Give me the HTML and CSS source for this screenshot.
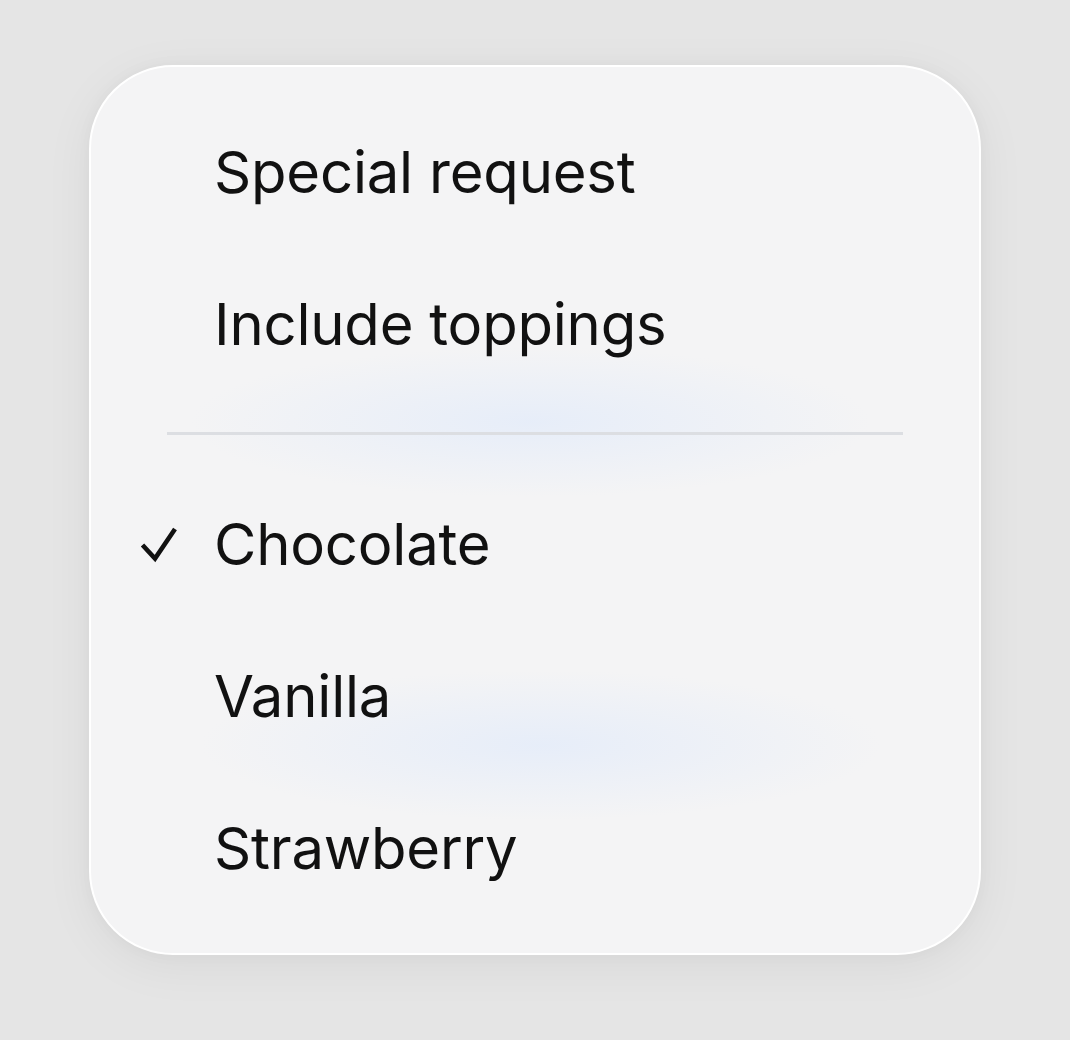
FILE: index.html
```html
<!DOCTYPE html>
<html>
<head>
    <title>Flavor menu</title>
    <link rel="stylesheet" href="styles.css">
</head>
<body>
    <div class="menu">
        <div class="item"><span class="check"></span><span class="label">Special request</span></div>
        <div class="item"><span class="check"></span><span class="label">Include toppings</span></div>

        <div class="divider"></div>

        <div class="item selected">
            <span class="check">
                <svg width="38" height="38" viewBox="0 0 38 38">
                    <path d="M3.5 20 L16 33.5 L36 4" fill="none" stroke="#111" stroke-width="4.6" stroke-linejoin="miter"/>
                </svg>
            </span>
            <span class="label">Chocolate</span>
        </div>
        <div class="item"><span class="check"></span><span class="label">Vanilla</span></div>
        <div class="item"><span class="check"></span><span class="label">Strawberry</span></div>
    </div>
</body>
</html>
```

FILE: styles.css
```css
html {
    background: #e5e5e5;
}
body {
    margin: 0;
    padding: 65px 0 0;
    min-height: 100vh;
    box-sizing: border-box;
    font-family: Inter, "Noto Sans", sans-serif;
    display: flex;
    justify-content: center;
    align-items: flex-start;
}
.menu {
    box-sizing: border-box;
    width: 892px;
    padding: 29px 0;
    border: 2px solid #fff;
    border-radius: 84px;
    background:
        radial-gradient(ellipse 340px 75px at 440px 355px, rgba(226, 235, 250, 0.75), rgba(226, 235, 250, 0)),
        radial-gradient(ellipse 340px 75px at 450px 678px, rgba(226, 235, 250, 0.75), rgba(226, 235, 250, 0)),
        #f4f4f5;
    box-shadow: 0 10px 50px rgba(0, 0, 0, 0.06), 0 0 16px rgba(0, 0, 0, 0.03);
}
.item {
    display: flex;
    align-items: center;
    height: 152px;
    padding-left: 48px;
}
.check {
    width: 38px;
    height: 38px;
    margin-right: 37px;
    flex: none;
}
.check svg {
    display: block;
}
.label {
    font-size: 58px;
    line-height: 152px;
    color: #111;
    letter-spacing: -0.2px;
}
.divider {
    height: 3px;
    margin: 32px 76px 33px;
    background: #dcdee2;
}
```
